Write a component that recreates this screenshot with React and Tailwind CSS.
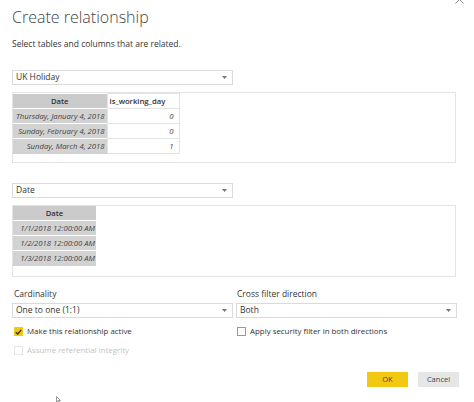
import React from "react";

const holidayRows = [
  { date: "Thursday, January 4, 2018", value: "0" },
  { date: "Sunday, February 4, 2018", value: "0" },
  { date: "Sunday, March 4, 2018", value: "1" },
];

const dateRows = ["1/1/2018 12:00:00 AM", "1/2/2018 12:00:00 AM", "1/3/2018 12:00:00 AM"];

function Select({ label, className = "" }) {
  return (
    <div
      className={`flex items-center justify-between h-[15px] border border-[#dadada] bg-white pl-[3px] pr-[5px] text-[8.5px] text-[#333] ${className}`}
    >
      <span>{label}</span>
      <svg width="5" height="3" viewBox="0 0 5 3">
        <path d="M0 0h5L2.5 3z" fill="#777" />
      </svg>
    </div>
  );
}

function Check({ checked, disabled, children }) {
  return (
    <label className={`flex items-center gap-[4px] text-[7.9px] ${disabled ? "text-[#c4c4c4]" : "text-[#333]"}`}>
      {checked ? (
        <span className="w-[9px] h-[9px] bg-[#f2c811] flex items-center justify-center">
          <svg width="7" height="6" viewBox="0 0 7 6">
            <path d="M0.8 3.2L2.7 5L6.3 0.8" stroke="#333" strokeWidth="1.3" fill="none" />
          </svg>
        </span>
      ) : (
        <span className={`w-[9px] h-[9px] border bg-white ${disabled ? "border-[#e6e6e6]" : "border-[#999]"}`} />
      )}
      <span>{children}</span>
    </label>
  );
}

export default function App() {
  return (
    <div className="relative w-[474px] h-[402px] overflow-hidden bg-white font-['Open_Sans',sans-serif] text-[#333]">
      {/* close button, mostly scrolled off the top */}
      <svg className="absolute left-[455px] top-[-5px]" width="9" height="9" viewBox="0 0 9 9">
        <path d="M0.5 0.5L8.5 8.5M8.5 0.5L0.5 8.5" stroke="#777" strokeWidth="0.9" />
      </svg>

      <div className="px-[12px] pt-[3px]">
        <h1 className="text-[16px] font-light text-[#444] leading-[28px]">Create relationship</h1>
        <p className="mt-[7px] text-[8.5px] leading-[12px]">Select tables and columns that are related.</p>

        <Select label="UK Holiday" className="mt-[20px] w-[221px]" />

        <div className="mt-[7px] w-[444px] h-[71px] border border-[#e3e3e3]">
          <table className="table-fixed border-collapse whitespace-nowrap text-[7.7px] leading-[14px]">
            <thead>
              <tr>
                <th className="w-[94px] h-[14px] p-0 bg-[#cbcbcb] font-semibold text-center">Date</th>
                <th className="w-[72px] h-[14px] p-0 bg-white border border-[#e3e3e3] font-semibold text-left pl-[2px]">
                  is_working_day
                </th>
              </tr>
            </thead>
            <tbody>
              {holidayRows.map((r) => (
                <tr key={r.date}>
                  <td className="h-[15px] p-0 bg-[#d2d2d2] border-t border-white italic text-right pr-[2px] text-[#444]">{r.date}</td>
                  <td className="h-[15px] p-0 bg-white border border-[#e3e3e3] italic text-right pr-[5px] text-[#444]">{r.value}</td>
                </tr>
              ))}
            </tbody>
          </table>
        </div>

        <Select label="Date" className="mt-[20px] w-[221px]" />

        <div className="mt-[7px] w-[444px] h-[72px] border border-[#e3e3e3]">
          <table className="table-fixed border-collapse whitespace-nowrap text-[7.7px] leading-[14px]">
            <thead>
              <tr>
                <th className="w-[83px] h-[14px] p-0 bg-[#cbcbcb] font-semibold text-center">Date</th>
              </tr>
            </thead>
            <tbody>
              {dateRows.map((d) => (
                <tr key={d}>
                  <td className="h-[15px] p-0 bg-[#d2d2d2] border-t border-white italic text-right pr-[1px] text-[#444]">{d}</td>
                </tr>
              ))}
            </tbody>
          </table>
        </div>

        <div className="mt-[11px] flex gap-[3px]">
          <div className="w-[221px]">
            <div className="pl-[2px] text-[8.5px] leading-[12px]">Cardinality</div>
            <Select label="One to one (1:1)" className="mt-[3px]" />
          </div>
          <div className="w-[221px]">
            <div className="pl-[1px] text-[8.5px] leading-[12px]">Cross filter direction</div>
            <Select label="Both" className="mt-[3px]" />
          </div>
        </div>

        <div className="mt-[8px] flex">
          <div className="w-[224px] pl-[2px] flex flex-col gap-[7px]">
            <Check checked>Make this relationship active</Check>
            <Check disabled>Assume referential integrity</Check>
          </div>
          <div className="pl-[1px]">
            <Check>Apply security filter in both directions</Check>
          </div>
        </div>

        <div className="mt-[15px] flex justify-end gap-[10px] pr-[3px]">
          <button className="w-[41px] h-[15px] bg-[#f2c811] text-[7.5px] text-[#444]">OK</button>
          <button className="w-[41px] h-[15px] bg-[#e6e6e6] text-[7.5px] text-[#444]">Cancel</button>
        </div>
      </div>

      {/* mouse pointer */}
      <svg className="absolute left-[56px] top-[396px]" width="5" height="7" viewBox="0 0 5 7">
        <path d="M0.5 0.5v5.5l1.3-1.2 1 2 0.8-0.4-1-1.9h1.8z" fill="#fff" stroke="#555" strokeWidth="0.6" />
      </svg>
    </div>
  );
}
